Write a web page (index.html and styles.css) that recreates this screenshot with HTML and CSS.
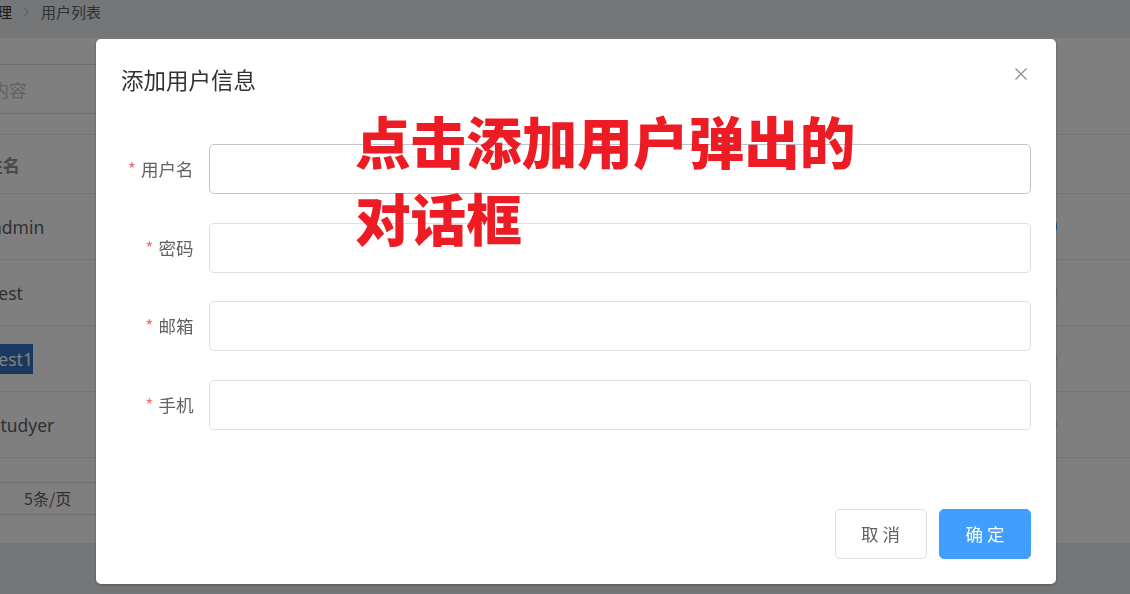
FILE: index.html
```html
<!DOCTYPE html>
<html lang="zh-CN">
<head>
<meta charset="utf-8">
<title>用户列表</title>
<link rel="stylesheet" href="styles.css">
</head>
<body>
<div class="page">
  <div class="breadcrumb">
    <span class="crumb crumb-link">用户管理</span>
    <svg class="crumb-sep" width="7" height="10" viewBox="0 0 7 10"><polyline points="1,1 5.5,5 1,9" fill="none" stroke="#c0c4cc" stroke-width="1.2"/></svg>
    <span class="crumb">用户列表</span>
  </div>
  <div class="card">
    <div class="search"><span class="placeholder">请输入内容</span></div>
    <div class="table">
      <div class="row head"><div class="cell name head-name">姓名</div><div class="cell ctl"></div></div>
      <div class="row"><div class="cell name">admin</div><div class="cell ctl"><span class="switch on"></span></div></div>
      <div class="row"><div class="cell name">test</div><div class="cell ctl"><span class="switch"></span></div></div>
      <div class="row"><div class="cell name"><span class="selected">test1</span></div><div class="cell ctl"><span class="switch"></span></div></div>
      <div class="row"><div class="cell name">studyer</div><div class="cell ctl"><span class="switch"></span></div></div>
    </div>
    <div class="pager"><div class="sizes">5条/页</div></div>
  </div>
</div>

<div class="mask"></div>

<div class="dialog-wrapper">
  <div class="dialog">
    <div class="dialog-header">
      <span class="dialog-title">添加用户信息</span>
      <button class="dialog-close" aria-label="关闭">
        <svg width="12" height="12" viewBox="0 0 12 12"><path d="M0.5 0.5 L11.5 11.5 M11.5 0.5 L0.5 11.5" stroke="#909399" stroke-width="1.3" fill="none"/></svg>
      </button>
    </div>
    <div class="dialog-body">
      <div class="form-item">
        <label class="form-label"><span class="req">*</span>用户名</label>
        <div class="form-input hover"></div>
      </div>
      <div class="form-item">
        <label class="form-label"><span class="req">*</span>密码</label>
        <div class="form-input"></div>
      </div>
      <div class="form-item">
        <label class="form-label"><span class="req">*</span>邮箱</label>
        <div class="form-input"></div>
      </div>
      <div class="form-item">
        <label class="form-label"><span class="req">*</span>手机</label>
        <div class="form-input"></div>
      </div>
    </div>
    <div class="dialog-footer">
      <button class="btn btn-default">取 消</button>
      <button class="btn btn-primary">确 定</button>
    </div>
  </div>
</div>

<div class="note">点击添加用户弹出的<br>对话框</div>
</body>
</html>
```

FILE: styles.css
```css
* { box-sizing: border-box; }

html, body {
  margin: 0;
  padding: 0;
  height: 100%;
  overflow: hidden;
}

body {
  background: #eaedf1;
  font-family: "Noto Sans", "Noto Sans CJK SC", sans-serif;
  color: #606266;
}

.page {
  width: 1260px;
  margin-left: -100px;
}

/* breadcrumb */
.breadcrumb {
  height: 38px;
  padding: 3px 0 0 52px;
  display: flex;
  align-items: flex-start;
  font-family: "Noto Sans CJK SC", sans-serif;
  font-size: 15px;
  line-height: 18px;
}
.crumb { color: #606266; }
.crumb-link { color: #303133; }
.crumb-sep { margin: 4px 11px 0 11px; }

/* card */
.card {
  background: #fff;
  padding: 26px 0 28px 19px;
}

.search {
  width: 500px;
  height: 50px;
  border: 1px solid #dcdfe6;
  border-radius: 5px;
  padding-left: 19px;
  display: flex;
  align-items: center;
}
.placeholder {
  font-family: "Noto Sans CJK SC", sans-serif;
  font-size: 17.5px;
  color: #c0c4cc;
}

.table {
  margin: 20px 0 0 58px;
  border-top: 1px solid #ebeef5;
}
.row {
  display: flex;
  height: 66px;
  border-bottom: 1px solid #ebeef5;
  align-items: center;
  font-size: 17.5px;
}
.row.head { height: 59px; }
.cell { padding: 0 15px; }
.name { flex: 1; color: #606266; }
.head-name {
  font-family: "Noto Sans CJK SC", sans-serif;
  font-weight: bold;
  color: #909399;
  margin-left: -7px;
}
.ctl {
  display: flex;
  justify-content: flex-end;
  padding-right: 103px;
}
.switch {
  display: block;
  width: 50px;
  height: 25px;
  border-radius: 12.5px;
  background: #dcdfe6;
}
.switch.on { background: #409eff; }
.selected {
  background: #3470c0;
  color: #fff;
  padding: 3px 0;
}

.pager {
  margin: 24px 0 0 71px;
}
.sizes {
  width: 150px;
  height: 33px;
  border: 1px solid #dcdfe6;
  border-radius: 4px;
  padding-left: 33px;
  font-family: "Noto Sans CJK SC", sans-serif;
  font-size: 16px;
  line-height: 31px;
  color: #606266;
}

/* overlay */
.mask {
  position: fixed;
  inset: 0;
  background: rgba(0, 0, 0, 0.5);
}

.dialog-wrapper {
  position: fixed;
  inset: 0;
  padding: 39px 0 0 96px;
}

.dialog {
  width: 960px;
  background: #fff;
  border-radius: 5px;
  box-shadow: 0 1px 3px rgba(0, 0, 0, 0.3);
  font-family: "Noto Sans CJK SC", sans-serif;
}

.dialog-header {
  display: flex;
  justify-content: space-between;
  align-items: flex-start;
  padding: 25px 25px 12.5px 25px;
}
.dialog-title {
  font-size: 22.5px;
  line-height: 30px;
  color: #303133;
}
.dialog-close {
  width: 20px;
  height: 20px;
  padding: 0;
  border: none;
  background: none;
  display: flex;
  align-items: center;
  justify-content: center;
}

.dialog-body {
  padding: 37.5px 25px;
}
.form-item {
  display: flex;
  margin-bottom: 28.7px;
}
.form-label {
  width: 87.5px;
  padding-right: 15px;
  text-align: right;
  font-size: 17.5px;
  line-height: 50px;
  color: #606266;
}
.req {
  color: #f56c6c;
  margin-right: 5px;
}
.form-input {
  flex: 1;
  height: 50px;
  border: 1px solid #dcdfe6;
  border-radius: 5px;
}
.form-input.hover { border-color: #c0c4cc; }

.dialog-footer {
  padding: 12.5px 25px 25px;
  display: flex;
  justify-content: flex-end;
  gap: 12.5px;
}
.btn {
  width: 92px;
  height: 50px;
  border-radius: 5px;
  font-family: "Noto Sans CJK SC", sans-serif;
  font-size: 17.5px;
  padding: 0;
}
.btn-default {
  background: #fff;
  border: 1px solid #dcdfe6;
  color: #606266;
}
.btn-primary {
  background: #409eff;
  border: 1px solid #409eff;
  color: #fff;
}

/* annotation */
.note {
  position: fixed;
  left: 355px;
  top: 102px;
  font-family: "Noto Sans CJK SC", sans-serif;
  font-weight: 900;
  font-size: 55.6px;
  line-height: 77px;
  color: #ed1c24;
  white-space: nowrap;
}
```
